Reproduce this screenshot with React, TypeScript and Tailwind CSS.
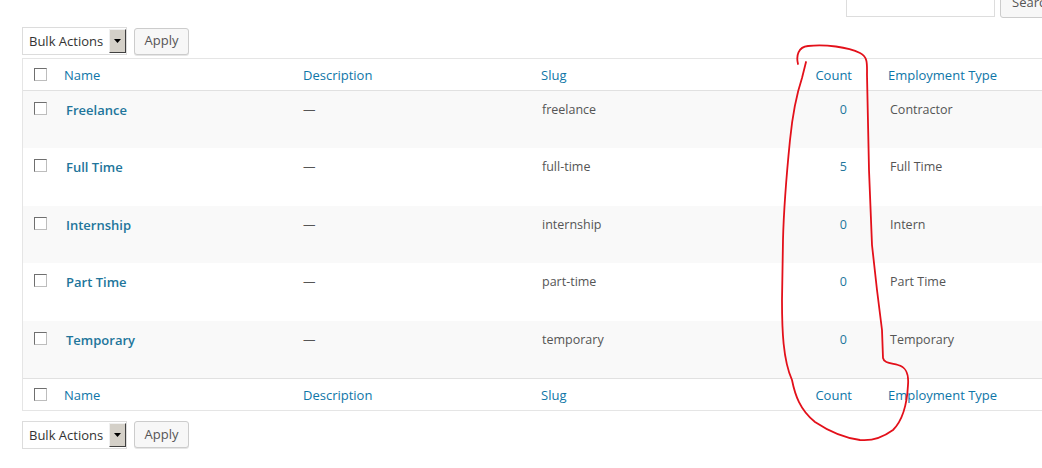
import React from "react";

const rows = [
  { name: "Freelance", slug: "freelance", count: "0", type: "Contractor" },
  { name: "Full Time", slug: "full-time", count: "5", type: "Full Time" },
  { name: "Internship", slug: "internship", count: "0", type: "Intern" },
  { name: "Part Time", slug: "part-time", count: "0", type: "Part Time" },
  { name: "Temporary", slug: "temporary", count: "0", type: "Temporary" },
];

function Check() {
  return (
    <span className="block w-[13px] h-[13px] bg-white border border-t-[#6f6f6f] border-l-[#6f6f6f] border-b-[#bdbdbd] border-r-[#bdbdbd]" />
  );
}

function Bulk() {
  return (
    <div className="flex items-center gap-[7px] h-[28px]">
      <div className="flex items-stretch h-[28px] w-[105px] border border-[#dcdcdc] bg-white">
        <span className="flex-1 pl-[6px] text-[13px] leading-[26px] text-[#333] whitespace-nowrap overflow-hidden">Bulk Actions</span>
        <span className="w-[17px] my-[1px] bg-[#d4d0c8] border border-t-[#f0f0f0] border-l-[#f0f0f0] border-b-[#404040] border-r-[#404040] flex items-center justify-center">
          <svg width="7" height="4" viewBox="0 0 7 4"><path d="M0 0h7L3.5 4z" fill="#000" /></svg>
        </span>
      </div>
      <button className="h-[27px] w-[55px] rounded-[3px] border border-[#cccccc] bg-[#f7f7f7] text-[13px] text-[#555] shadow-[0_1px_0_#e6e6e6]">Apply</button>
    </div>
  );
}

const cols = "grid grid-cols-[33px_239px_238px_267px_80px_200px]";

function HeadRow({ top }: { top?: boolean }) {
  return (
    <div className={`${cols} h-[32px] items-center bg-white ${top ? "border-b" : "border-t"} border-[#e1e1e1] text-[13px] text-[#0e76a8]`}>
      <div className="pl-[11px]"><Check /></div>
      <div className="pl-[8px] pt-[2px]">Name</div>
      <div className="pl-[8px] pt-[2px]">Description</div>
      <div className="pl-[8px] pt-[2px]">Slug</div>
      <div className="text-right pr-[28px] pt-[2px]">Count</div>
      <div className="pl-[8px] pt-[2px] whitespace-nowrap">Employment Type</div>
    </div>
  );
}

export default function App() {
  return (
    <div className="relative w-[1042px] h-[468px] overflow-hidden bg-white font-['Open_Sans',sans-serif]">
      <div className="flex justify-end gap-[5px] -mt-[12px] -mr-[30px] h-[30px]">
        <div className="w-[149px] h-[29px] border border-[#dddddd] bg-white" />
        <button className="w-[72px] h-[30px] rounded-[3px] border border-[#cccccc] bg-[#f7f7f7] text-[13px] text-[#555] text-left pl-[11px]">Search</button>
      </div>
      <div className="ml-[22px] mt-[9px]">
        <Bulk />
      </div>
      <div className="ml-[22px] mt-[3px] w-[1060px] border border-[#e5e5e5]">
        <HeadRow top />
        {rows.map((r, i) => (
          <div key={r.name} className={`${cols} h-[57.4px] items-start ${i % 2 === 0 ? "bg-[#f9f9f9]" : "bg-white"} text-[12.5px] text-[#555] leading-[20px]`}>
            <div className="pl-[11px] pt-[11px]"><Check /></div>
            <div className="pl-[10px] pt-[9px] text-[13px] font-semibold text-[#21759b]">{r.name}</div>
            <div className="pl-[8px] pt-[9px]">—</div>
            <div className="pl-[9px] pt-[9px]">{r.slug}</div>
            <div className="text-right pr-[33px] pt-[9px] text-[#21759b]">{r.count}</div>
            <div className="pl-[10px] pt-[9px]">{r.type}</div>
          </div>
        ))}
        <HeadRow />
      </div>
      <div className="ml-[22px] mt-[10px]">
        <Bulk />
      </div>
      <svg className="absolute left-0 top-0 pointer-events-none" width="1042" height="468" viewBox="0 0 1042 468">
        <path
          d="M 798 64 C 796 56, 798 47, 808 46 C 825 44, 848 47, 860 53 C 868 57, 867 64, 867 75 L 869 170 L 872 245 L 877 290 L 882 330 L 883 358 C 884 363, 890 363, 898 365 C 906 367, 909 373, 908 385 C 907 405, 903 420, 893 430 C 882 438, 870 441, 860 440 C 845 438, 830 432, 815 422 C 800 410, 795 395, 792 380 C 783 360, 782 330, 782 300 L 783 240 C 784 200, 787 170, 790 140 C 793 110, 798 90, 802 78 L 806 62"
          fill="none"
          stroke="#e3101a"
          strokeWidth="1.8"
          strokeLinecap="round"
          strokeLinejoin="round"
        />
      </svg>
    </div>
  );
}
